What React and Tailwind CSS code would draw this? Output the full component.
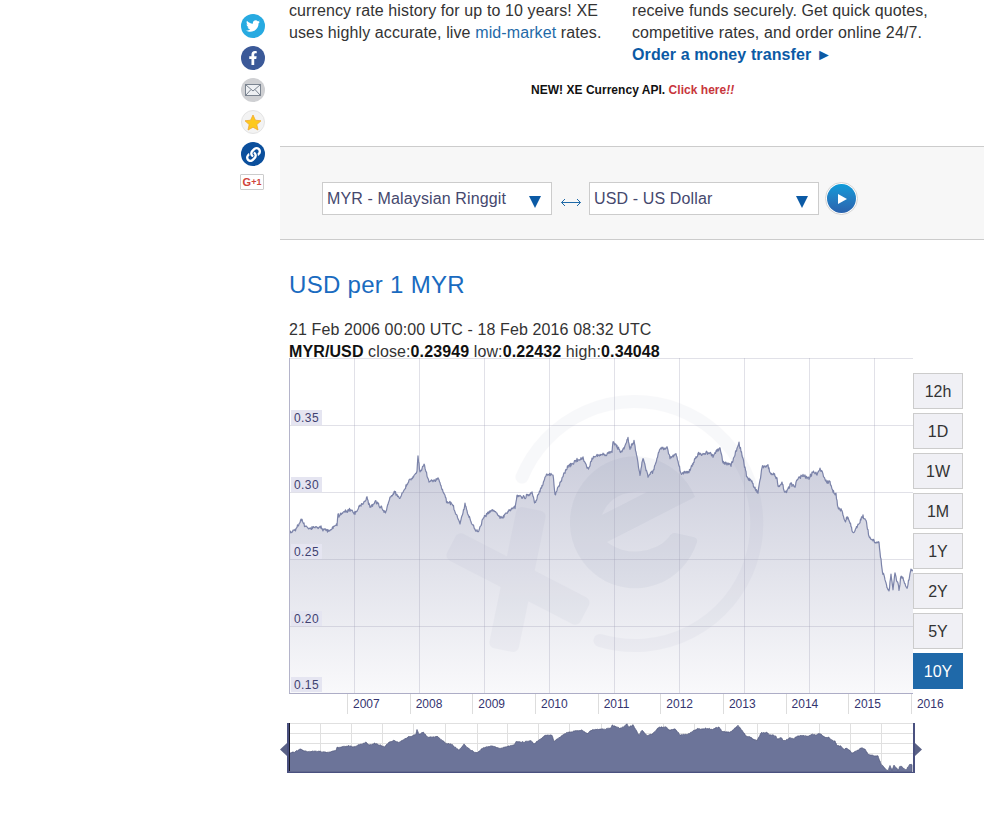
import { FaTwitter, FaFacebookF, FaLink } from "react-icons/fa";

const keyPoints = [
  [290, 533], [295, 531], [302, 520], [305, 526], [310, 529], [322, 527], [328, 531], [337, 525], [338, 516],
  [347, 510], [355, 512], [367, 498], [370, 507], [377, 502], [385, 512], [390, 498], [395, 492], [399, 498],
  [405, 490], [410, 480], [417, 472], [418, 457], [420, 473], [424, 466], [429, 483], [438, 479], [444, 493],
  [447, 503], [452, 503], [460, 525], [465, 505], [470, 520], [478, 534], [483, 518], [492, 509], [500, 518],
  [515, 507], [517, 496], [523, 497], [532, 493], [535, 503], [547, 473], [553, 475], [555, 495], [567, 468],
  [577, 460], [583, 459], [588, 469], [593, 457], [612, 452], [613, 442], [622, 453], [628, 438], [630, 450],
  [634, 442], [640, 476], [643, 458], [648, 475], [653, 470], [660, 448], [667, 447], [670, 458], [676, 452],
  [681, 475], [690, 470], [698, 453], [713, 455], [720, 449], [723, 462], [731, 465], [739, 442], [747, 477],
  [758, 492], [762, 468], [768, 467], [770, 472], [777, 478], [778, 487], [782, 483], [785, 493], [791, 483],
  [795, 487], [797, 479], [803, 476], [809, 478], [813, 472], [817, 474], [820, 468], [827, 483], [830, 482],
  [833, 493], [836, 494], [838, 508], [842, 510], [845, 520], [848, 516], [853, 532], [858, 525], [863, 515],
  [866, 520], [869, 537], [875, 542], [879, 543], [881, 559], [882, 570], [885, 580], [889, 592], [891, 575],
  [893, 590], [895, 572], [899, 590], [901, 575], [905, 583], [907, 590], [911, 568], [913, 572],
];

function buildSeries() {
  const out = [];
  let seed = 1337;
  const rand = () => {
    seed = (seed * 16807) % 2147483647;
    return seed / 2147483647 - 0.5;
  };
  let seg = 0;
  let drift = 0;
  for (let x = 290; x <= 913; x += 0.5) {
    while (seg < keyPoints.length - 2 && x > keyPoints[seg + 1][0]) seg++;
    const [x0, y0] = keyPoints[seg];
    const [x1, y1] = keyPoints[seg + 1];
    const y = y0 + ((y1 - y0) * (x - x0)) / (x1 - x0);
    drift = drift * 0.8 + rand() * 1.4;
    out.push([x, y + drift + rand() * 3]);
  }
  return out;
}

const series = buildSeries();
const linePath = "M" + series.map(([x, y]) => `${x} ${y.toFixed(1)}`).join("L");
const areaPath = `${linePath}L913 693L290 693Z`;
const navPath =
  "M" +
  series.map(([x, y]) => `${(x - 1).toFixed(1)} ${(724 + ((y - 438) * 47) / 154).toFixed(1)}`).join("L") +
  "L912 772L289 772Z";

const yLabels = [
  { label: "0.35", top: 52 },
  { label: "0.30", top: 119 },
  { label: "0.25", top: 186 },
  { label: "0.20", top: 253 },
  { label: "0.15", top: 319 },
];
const years = ["2007", "2008", "2009", "2010", "2011", "2012", "2013", "2014", "2015", "2016"];
const ranges = ["12h", "1D", "1W", "1M", "1Y", "2Y", "5Y", "10Y"];

const SocialRail = () => (
  <div className="flex w-[280px] shrink-0 flex-col gap-2 pl-[241px] pt-[14px]">
    <div className="flex h-6 w-6 items-center justify-center rounded-full bg-[#27aae1] text-[14px] text-white">
      <FaTwitter />
    </div>
    <div className="flex h-6 w-6 items-center justify-center rounded-full bg-[#3b5998] text-[14px] text-white">
      <FaFacebookF />
    </div>
    <div className="flex h-6 w-6 items-center justify-center rounded-full bg-[#cfd0d3]">
      <svg width="16" height="12" viewBox="0 0 16 12">
        <rect x="0.5" y="0.5" width="15" height="11" fill="#eef0f3" stroke="#7b8490" />
        <path d="M1 1L8 7L15 1M1 11L6 5.5M15 11L10 5.5" fill="none" stroke="#7b8490" />
      </svg>
    </div>
    <div className="flex h-6 w-6 items-center justify-center rounded-full border border-[#e4e4e4] bg-[#f3f3f3]">
      <svg width="18" height="17" viewBox="0 0 18 17">
        <polygon points="9,1 11.4,6.2 17,6.8 12.8,10.6 14,16 9,13.2 4,16 5.2,10.6 1,6.8 6.6,6.2" fill="#fdc91c" stroke="#f0a830" strokeWidth="0.8" />
      </svg>
    </div>
    <div className="flex h-6 w-6 items-center justify-center rounded-full bg-[#0b4f9c] text-[15px] text-white">
      <FaLink />
    </div>
    <div className="-ml-px flex h-[16px] w-6 items-center justify-center rounded-[1px] border border-[#ccc] bg-white font-bold leading-none text-[#d0433a]">
      <span className="text-[11px]">G</span>
      <span className="text-[9px]">+1</span>
    </div>
  </div>
);

const CurrencySelect = ({ label }) => (
  <div className="flex h-[33px] w-[230px] items-center justify-between border border-[#ccc] bg-white pl-[4px] pr-[10px] text-[16px] tracking-[0.13px] text-[#45486e]">
    <span>{label}</span>
    <svg width="12" height="12" viewBox="0 0 12 12" className="mt-[6px]">
      <polygon points="0,0 12,0 6,12" fill="#0b5aa5" />
    </svg>
  </div>
);

const Chart = () => (
  <div className="relative h-[336px] w-[624px] shrink-0">
    <svg width="624" height="336" viewBox="289 358 624 336" className="block">
      <defs>
        <linearGradient id="areaFill" gradientUnits="userSpaceOnUse" x1="0" y1="440" x2="0" y2="693">
          <stop offset="0" stopColor="#c9cbda" />
          <stop offset="1" stopColor="#f9f9fb" />
        </linearGradient>
      </defs>
      <path d={areaPath} fill="url(#areaFill)" />
      <path
        d="M695 497A65 66 0 1 0 697 542Q698 538 693 537L675 533Q671 533 669 537A40 32 0 0 1 607 542ZM602 515Q612 489 647 492Z"
        fill="#5b628f"
        fillRule="evenodd"
        opacity="0.06"
      />
      <g opacity="0.04">
        <path d="M522 477A122 122 0 1 1 600 640.5" fill="none" stroke="#5b628f" strokeWidth="13" strokeLinecap="round" />
        <rect x="443" y="564" width="150" height="30" rx="6" fill="#5b628f" transform="rotate(27.3 518 579)" />
        <rect x="502.5" y="507.5" width="30" height="144" rx="6" fill="#5b628f" transform="rotate(11.6 517.5 579.5)" />
      </g>
      <g stroke="#9c9cb4" strokeOpacity="0.3" strokeWidth="1">
        {[425.5, 492.5, 559.5, 626.5].map((y) => (
          <line key={y} x1="289" x2="913" y1={y} y2={y} />
        ))}
        {[354.5, 419.5, 484.5, 549.5, 614.5, 679.5, 744.5, 809.5, 874.5].map((x) => (
          <line key={x} x1={x} x2={x} y1="358" y2="693" />
        ))}
        <line x1="289" x2="913" y1="358.5" y2="358.5" />
        <line x1="913.5" x2="913.5" y1="358" y2="693" />
      </g>
      <path d={linePath} fill="none" stroke="#7b83a9" strokeWidth="1.2" strokeLinejoin="round" />
      <line x1="289.5" x2="289.5" y1="358" y2="693" stroke="#b4b4ca" />
      <line x1="289" x2="913" y1="693.5" y2="693.5" stroke="#adadc6" />
    </svg>
    {yLabels.map((item) => (
      <span
        key={item.label}
        className="absolute left-[2px] flex h-[15px] w-[31px] items-center justify-center bg-[#e5e5f1] text-[12px] leading-none tracking-[0.4px] text-[#3f4170]"
        style={{ top: item.top }}
      >
        {item.label}
      </span>
    ))}
  </div>
);

const RangeButtons = () => (
  <div className="flex flex-col gap-1 pt-[15px]">
    {ranges.map((range) =>
      range === "10Y" ? (
        <div
          key={range}
          className="flex h-[36px] w-[50px] items-center justify-center bg-[#1f69a9] pt-px text-[16px] font-medium text-white"
        >
          {range}
        </div>
      ) : (
        <div
          key={range}
          className="flex h-[36px] w-[50px] items-center justify-center border border-[#ccc] bg-[#f0f0f5] pt-px text-[16px] text-[#333]"
        >
          {range}
        </div>
      )
    )}
  </div>
);

const YearAxis = () => (
  <div className="flex h-[20px] w-[624px] pl-[58px]">
    {years.map((year) => (
      <div
        key={year}
        className="h-[20px] w-[62.67px] shrink-0 border-l border-[#ddd] pl-[5px] text-[12px] leading-[20px] text-[#34346f]"
      >
        {year}
      </div>
    ))}
  </div>
);

const Navigator = () => (
  <svg width="642" height="50" viewBox="280 723 642 50" className="-ml-[9px] mt-[9px] block">
    <g stroke="#e0e0e0" strokeWidth="1">
      {[723.5, 733.5, 743.5, 753.5].map((y) => (
        <line key={y} x1="289" x2="913" y1={y} y2={y} />
      ))}
      {[320.5, 351.5, 382.5, 413.5, 445.5, 477.5, 507.5, 538.5, 569.5, 601.5, 632.5, 663.5, 694.5, 725.5, 757.5, 788.5, 819.5, 850.5, 881.5].map((x) => (
        <line key={x} x1={x} x2={x} y1="723" y2="772" />
      ))}
    </g>
    <path d={navPath} fill="#6c7499" stroke="#4d5478" strokeWidth="0.7" />
    <rect x="287" y="723" width="2" height="50" fill="#4a5180" />
    <rect x="289" y="723" width="1" height="48" fill="#1a1a2a" />
    <rect x="913" y="723" width="2" height="50" fill="#4a5180" />
    <rect x="287" y="772" width="628" height="1" fill="#4a5180" />
    <polygon points="287,743 287,756 280,749.5" fill="#5a6186" />
    <polygon points="915,743 915,756 922,749.5" fill="#5a6186" />
  </svg>
);

export default function App() {
  return (
    <div className="flex h-[816px] w-[990px] overflow-hidden bg-white font-['Liberation_Sans',Arial,sans-serif] text-[#333]">
      <SocialRail />
      <div className="w-[704px]">
        <div className="flex h-[76px] pl-[9px] text-[16px] leading-[22px] tracking-[0.11px]">
          <p className="w-[343px]">
            currency rate history for up to 10 years! XE
            <br />
            uses highly accurate, live <span className="text-[#1f6aa8]">mid-market</span> rates.
          </p>
          <p>
            receive funds securely. Get quick quotes,
            <br />
            competitive rates, and order online 24/7.
            <br />
            <span className="font-bold text-[#0b5aa5]">Order a money transfer ►</span>
          </p>
        </div>
        <p className="h-[70px] pl-[251px] pt-[6px] text-[12px] font-bold leading-[16px] tracking-[0.03px] text-[#111]">
          NEW! XE Currency API. <span className="text-[#c8363c]">Click here<em>!!</em></span>
        </p>
        <div className="flex h-[94px] items-start border-y border-[#ccc] bg-[#f7f7f7] pl-[42px] pt-[35px]">
          <CurrencySelect label="MYR - Malaysian Ringgit" />
          <div className="flex w-[37px] justify-center pt-[16px]">
            <svg width="20" height="9" viewBox="0 0 20 9">
              <path d="M0.5 4.5H19.5M4 1L0.5 4.5L4 8M16 1L19.5 4.5L16 8" fill="none" stroke="#1f6aa8" />
            </svg>
          </div>
          <CurrencySelect label="USD - US Dollar" />
          <div className="ml-[6px] flex h-[33px] w-[33px] items-center justify-center rounded-full border border-[#d4d4d4] bg-white">
            <div className="flex h-[29px] w-[29px] items-center justify-center rounded-full bg-gradient-to-b from-[#0b9bd9] to-[#2a62ad]">
              <svg width="10" height="10" viewBox="0 0 10 10">
                <polygon points="1,0 10,5 1,10" fill="#fff" />
              </svg>
            </div>
          </div>
        </div>
        <div className="pl-[9px]">
          <h1 className="pt-[30px] text-[24px] leading-[30px] tracking-[0.3px] text-[#1a6bc0]">USD per 1 MYR</h1>
          <p className="pt-[19px] text-[16px] leading-[22px] tracking-[0.11px]">21 Feb 2006 00:00 UTC - 18 Feb 2016 08:32 UTC</p>
          <p className="text-[16px] leading-[22px] tracking-[0.11px]">
            <b className="text-[#111]">MYR/USD</b> close:<b className="text-[#111]">0.23949</b> low:
            <b className="text-[#111]">0.22432</b> high:<b className="text-[#111]">0.34048</b>
          </p>
          <div className="-mt-[5px] flex">
            <Chart />
            <RangeButtons />
          </div>
          <YearAxis />
          <Navigator />
        </div>
      </div>
    </div>
  );
}
